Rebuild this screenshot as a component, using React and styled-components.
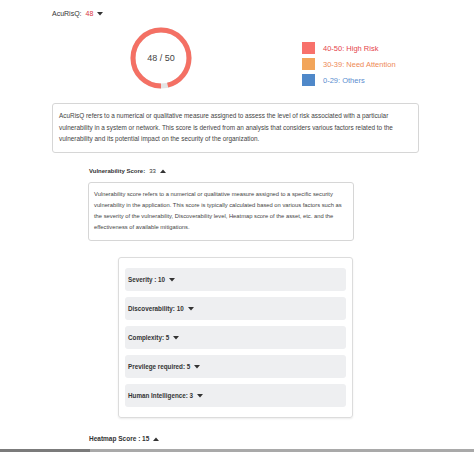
import React from "react";
import styled, { createGlobalStyle } from "styled-components";

const Global = createGlobalStyle`
  html, body { margin: 0; padding: 0; background: #fff; }
  body { font-family: "Liberation Sans", Arial, sans-serif; color: #333; }
  * { box-sizing: border-box; }
`;

const Screen = styled.div`
  width: 474px;
  height: 452px;
  display: flex;
  flex-direction: column;
  overflow: hidden;
`;

const Content = styled.div`
  flex: 1;
  padding: 9px 0 0 52px;
  display: flex;
  flex-direction: column;
`;

const Title = styled.div`
  display: flex;
  align-items: center;
  gap: 2px;
  height: 9px;
  font-size: ${(p) => p.$size || 7}px;
  font-weight: ${(p) => (p.$bold ? 700 : 400)};
  color: #333;
  margin-left: ${(p) => p.$indent || 0}px;
  margin-top: ${(p) => p.$top || 0}px;
  white-space: nowrap;
`;

const Value = styled.span`
  font-weight: 400;
  color: ${(p) => p.$color || "#333"};
  margin-left: 2px;
`;

const Caret = ({ up }) => (
  <svg width="6" height="4" viewBox="0 0 6 4" style={{ marginLeft: 2 }}>
    {up ? <path d="M0 4 L3 0.5 L6 4 Z" fill="#333" /> : <path d="M0 0 L6 0 L3 3.5 Z" fill="#333" />}
  </svg>
);

const TopRow = styled.div`
  display: flex;
  align-items: flex-start;
  margin-top: 9px;
`;

const DonutWrap = styled.div`
  position: relative;
  width: 62px;
  height: 62px;
  margin-left: 78px;
  display: flex;
  align-items: center;
  justify-content: center;
`;

const DonutLabel = styled.span`
  position: absolute;
  font-size: 9px;
  color: #444;
`;

const Legend = styled.div`
  display: flex;
  flex-direction: column;
  gap: 4px;
  margin-left: 110px;
  margin-top: 15px;
`;

const LegendItem = styled.div`
  display: flex;
  align-items: center;
  gap: 8px;
  font-size: 7.5px;
  color: ${(p) => p.$text};
  height: 12px;
`;

const Swatch = styled.span`
  width: 13px;
  height: 12px;
  background: ${(p) => p.$color};
`;

const DescBox = styled.div`
  width: ${(p) => p.$width}px;
  margin-left: ${(p) => p.$indent || 0}px;
  margin-top: ${(p) => p.$top}px;
  border: 1px solid #d6d6d6;
  border-radius: 3px;
  padding: 6px ${(p) => p.$padX || 6}px 7px;
  font-size: ${(p) => p.$font}px;
  line-height: ${(p) => p.$line}px;
  color: #444;
`;

const Criteria = styled.div`
  width: 235px;
  margin-left: 66px;
  margin-top: 16px;
  border: 1px solid #dcdcdc;
  border-radius: 3px;
  box-shadow: 0 1px 2px rgba(0, 0, 0, 0.08);
  padding: 10px 6px 10px 6px;
  display: flex;
  flex-direction: column;
  gap: 6px;
`;

const CriteriaRow = styled.div`
  height: 23px;
  background: #eeeff1;
  border-radius: 3px;
  display: flex;
  align-items: center;
  padding-left: 3px;
  font-size: 6.3px;
  font-weight: 700;
  color: #333;
  gap: 2px;
`;

const ScrollBar = styled.div`
  height: 3px;
  display: flex;
  background: #a9a9a9;
`;

const ScrollThumb = styled.div`
  width: 90px;
  background: #7b7b7b;
`;

function Donut() {
  const r = 28;
  const c = 2 * Math.PI * r;
  const frac = 48 / 50;
  return (
    <DonutWrap>
      <svg width="62" height="62" viewBox="0 0 62 62">
        <circle cx="31" cy="31" r={r} fill="none" stroke="#e4e4e4" strokeWidth="5" />
        <circle
          cx="31"
          cy="31"
          r={r}
          fill="none"
          stroke="#f47064"
          strokeWidth="5"
          strokeDasharray={`${c * frac} ${c}`}
          transform="rotate(90 31 31)"
        />
      </svg>
      <DonutLabel>48 / 50</DonutLabel>
    </DonutWrap>
  );
}

const criteria = [
  "Severity : 10",
  "Discoverability: 10",
  "Complexity: 5",
  "Previlege required: 5",
  "Human Intelligence: 3",
];

export default function App() {
  return (
    <Screen>
      <Global />
      <Content>
        <Title $size={7}>
          AcuRisQ:<Value $color="#d9363e">48</Value>
          <Caret />
        </Title>
        <TopRow>
          <Donut />
          <Legend>
            <LegendItem $text="#e5454c">
              <Swatch $color="#f8716b" />
              40-50: High Risk
            </LegendItem>
            <LegendItem $text="#ee8a55">
              <Swatch $color="#f2a55a" />
              30-39: Need Attention
            </LegendItem>
            <LegendItem $text="#5a8dcf">
              <Swatch $color="#4f88c9" />
              0-29: Others
            </LegendItem>
          </Legend>
        </TopRow>
        <DescBox $width={367} $top={14} $font={6.4} $line={11.5}>
          AcuRisQ refers to a numerical or qualitative measure assigned to assess the level of risk
          associated with a particular vulnerability in a system or network. This score is derived from
          an analysis that considers various factors related to the vulnerability and its potential
          impact on the security of the organization.
        </DescBox>
        <Title $bold $size={6} $indent={37} $top={14}>
          Vulnerability Score:<Value>33</Value>
          <Caret up />
        </Title>
        <DescBox $width={266} $indent={36} $top={6} $font={5.8} $line={11.2} $padX={5}>
          Vulnerability score refers to a numerical or qualitative measure assigned to a specific
          security vulnerability in the application. This score is typically calculated based on
          various factors such as the severity of the vulnerability, Discoverability level, Heatmap
          score of the asset, etc. and the effectiveness of available mitigations.
        </DescBox>
        <Criteria>
          {criteria.map((c) => (
            <CriteriaRow key={c}>
              {c}
              <Caret />
            </CriteriaRow>
          ))}
        </Criteria>
        <Title $bold $size={6.5} $indent={37} $top={16}>
          Heatmap Score : 15
          <Caret up />
        </Title>
      </Content>
      <ScrollBar>
        <ScrollThumb />
      </ScrollBar>
    </Screen>
  );
}
